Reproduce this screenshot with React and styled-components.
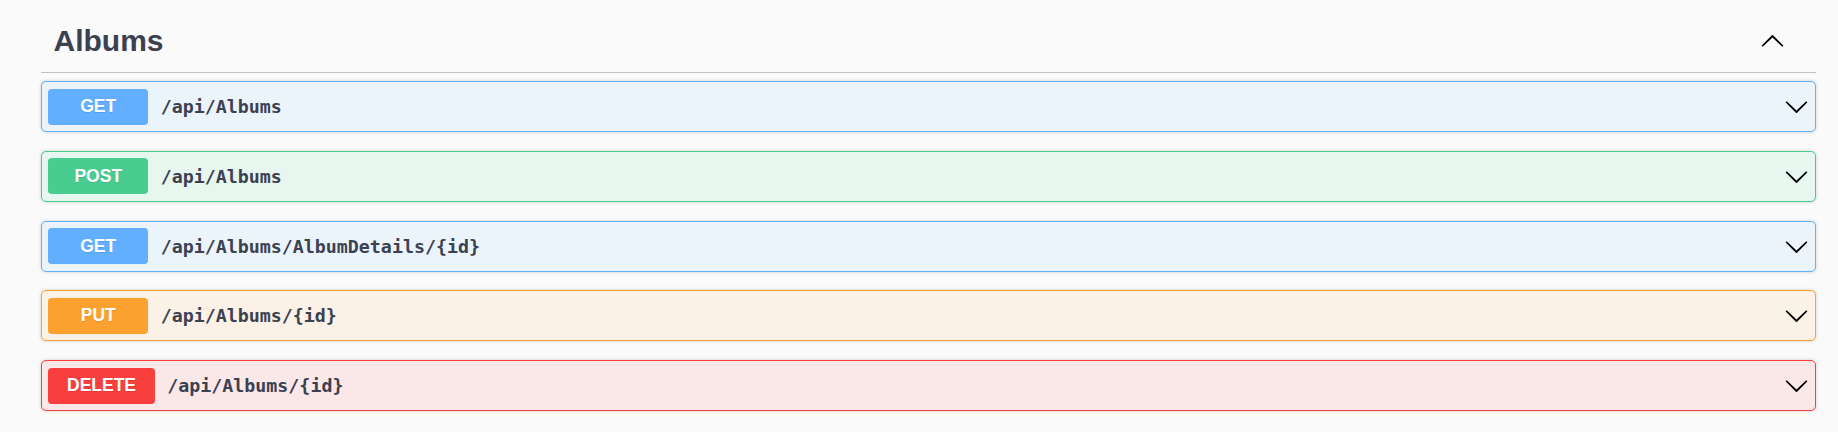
import styled, { createGlobalStyle, css } from "styled-components";

const GlobalStyle = createGlobalStyle`
  html, body {
    margin: 0;
    padding: 0;
    background: #fafafa;
  }
  * {
    box-sizing: border-box;
  }
`;

const methods = {
  get: { color: "#61affe", bg: "#ebf3fb" },
  post: { color: "#49cc90", bg: "#e8f6f0" },
  put: { color: "#fca130", bg: "#fbf1e6" },
  delete: { color: "#f93e3e", bg: "#fae7e7" },
};

const operations = [
  { method: "get", path: "/api/Albums" },
  { method: "post", path: "/api/Albums" },
  { method: "get", path: "/api/Albums/AlbumDetails/{id}" },
  { method: "put", path: "/api/Albums/{id}" },
  { method: "delete", path: "/api/Albums/{id}" },
];

function Arrow({ up }) {
  return (
    <ArrowSvg up={up ? 1 : 0} viewBox="0 0 20 20" width="25" height="25">
      <path d="M17.418 6.109c.272-.268.709-.268.979 0s.271.701 0 .969l-7.908 7.83c-.27.268-.707.268-.979 0l-7.908-7.83c-.27-.268-.27-.701 0-.969.271-.268.709-.268.979 0L10 13.25l7.418-7.141z" />
    </ArrowSvg>
  );
}

export default function App() {
  return (
    <>
      <GlobalStyle />
      <Page>
        <TagRow>
          <TagTitle>Albums</TagTitle>
          <ExpandButton>
            <Arrow up />
          </ExpandButton>
        </TagRow>
        <OpList>
          {operations.map((op, i) => (
            <OpBlock key={i} method={op.method}>
              <Method method={op.method}>{op.method.toUpperCase()}</Method>
              <Path>{op.path}</Path>
              <Arrow />
            </OpBlock>
          ))}
        </OpList>
      </Page>
    </>
  );
}

const Page = styled.div`
  width: 1838px;
  min-height: 432px;
  padding: 10px 22px 0 41px;
  background: #fafafa;
`;

const TagRow = styled.div`
  height: 63px;
  display: flex;
  align-items: center;
  padding: 0 19px 0 12.5px;
  border-bottom: 1px solid rgba(59, 65, 81, 0.3);
`;

const TagTitle = styled.h3`
  flex: 1;
  margin: 0;
  font-family: "Liberation Sans", Arial, sans-serif;
  font-size: 30px;
  font-weight: 700;
  color: #3b4151;
`;

const ExpandButton = styled.button`
  border: none;
  background: none;
  padding: 0 12.5px;
  display: flex;
  align-items: center;
`;

const ArrowSvg = styled.svg`
  flex: none;
  fill: #000;
  ${(p) =>
    p.up &&
    css`
      transform: rotate(180deg);
    `}
`;

const OpList = styled.div`
  margin-top: 8px;
`;

const OpBlock = styled.div`
  display: flex;
  align-items: center;
  height: 51px;
  padding: 0 6.25px;
  margin-bottom: 18.75px;
  border: 1px solid ${(p) => methods[p.method].color};
  border-radius: 5px;
  background: ${(p) => methods[p.method].bg};
  box-shadow: 0 0 3.75px rgba(0, 0, 0, 0.19);
`;

const Method = styled.span`
  min-width: 100px;
  height: 36px;
  line-height: 21px;
  padding: 7.5px 18.75px;
  border-radius: 3.75px;
  background: ${(p) => methods[p.method].color};
  color: #fff;
  font-family: "Liberation Sans", Arial, sans-serif;
  font-size: 17.5px;
  font-weight: 700;
  text-align: center;
  text-shadow: 0 1px 0 rgba(0, 0, 0, 0.1);
`;

const Path = styled.span`
  flex: 1;
  padding: 0 12.5px;
  font-family: "DejaVu Sans Mono", "Liberation Mono", monospace;
  font-size: 18.3px;
  font-weight: 700;
  color: #3b4151;
`;
